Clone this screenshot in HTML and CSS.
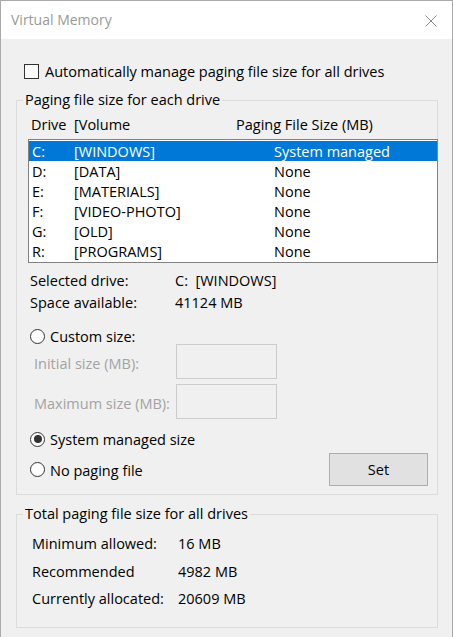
FILE: index.html
```html
<!DOCTYPE html>
<html lang="en">
<head>
    <meta charset="UTF-8">
    <title>Virtual Memory</title>
    <link rel="stylesheet" href="styles.css">
</head>
<body>
    <div class="window">
        <div class="titlebar">
            <span class="title">Virtual Memory</span>
            <svg class="close" width="12" height="12" viewBox="0 0 12 12">
                <path d="M0.5 0.5 L11.5 11.5 M11.5 0.5 L0.5 11.5" stroke="#8a8a8a" stroke-width="1" fill="none"/>
            </svg>
        </div>

        <div class="content">
            <div class="check-row">
                <span class="checkbox"></span>
                <span>Automatically manage paging file size for all drives</span>
            </div>

            <fieldset class="group drives">
                <legend>Paging file size for each drive</legend>

                <div class="list-header">
                    <span class="col-drive">Drive</span>
                    <span class="col-volume">[Volume</span>
                    <span>Paging File Size (MB)</span>
                </div>

                <div class="listbox">
                    <div class="list-row selected">
                        <span class="cell-drive">C:</span>
                        <span class="cell-volume">[WINDOWS]</span>
                        <span>System managed</span>
                    </div>
                    <div class="list-row">
                        <span class="cell-drive">D:</span>
                        <span class="cell-volume">[DATA]</span>
                        <span>None</span>
                    </div>
                    <div class="list-row">
                        <span class="cell-drive">E:</span>
                        <span class="cell-volume">[MATERIALS]</span>
                        <span>None</span>
                    </div>
                    <div class="list-row">
                        <span class="cell-drive">F:</span>
                        <span class="cell-volume">[VIDEO-PHOTO]</span>
                        <span>None</span>
                    </div>
                    <div class="list-row">
                        <span class="cell-drive">G:</span>
                        <span class="cell-volume">[OLD]</span>
                        <span>None</span>
                    </div>
                    <div class="list-row">
                        <span class="cell-drive">R:</span>
                        <span class="cell-volume">[PROGRAMS]</span>
                        <span>None</span>
                    </div>
                </div>

                <div class="info-row first">
                    <span class="info-label">Selected drive:</span>
                    <span>C:&nbsp; [WINDOWS]</span>
                </div>
                <div class="info-row">
                    <span class="info-label">Space available:</span>
                    <span>41124 MB</span>
                </div>

                <div class="radio-row custom">
                    <span class="radio"></span>
                    <span>Custom size:</span>
                </div>
                <div class="field-row">
                    <span class="field-label">Initial size (MB):</span>
                    <span class="field-box"></span>
                </div>
                <div class="field-row second">
                    <span class="field-label">Maximum size (MB):</span>
                    <span class="field-box"></span>
                </div>

                <div class="radio-row system">
                    <span class="radio checked"></span>
                    <span>System managed size</span>
                </div>
                <div class="radio-row none">
                    <span class="radio"></span>
                    <span class="grow">No paging file</span>
                    <button class="set-button">Set</button>
                </div>
            </fieldset>

            <fieldset class="group totals">
                <legend>Total paging file size for all drives</legend>
                <div class="total-row">
                    <span class="total-label">Minimum allowed:</span>
                    <span>16 MB</span>
                </div>
                <div class="total-row">
                    <span class="total-label">Recommended</span>
                    <span>4982 MB</span>
                </div>
                <div class="total-row">
                    <span class="total-label">Currently allocated:</span>
                    <span>20609 MB</span>
                </div>
            </fieldset>
        </div>
    </div>
</body>
</html>
```

FILE: styles.css
```css
:root {
    --face: #f0f0f0;
    --text: #000000;
    --disabled: #a3a3a3;
    --group-line: #dcdcdc;
    --highlight: #0078d7;
}

* {
    box-sizing: border-box;
}

body {
    margin: 0;
    font-family: "Open Sans", "Liberation Sans", sans-serif;
    font-size: 14.5px;
    color: var(--text);
    background: #ffffff;
}

.window {
    width: 453px;
    height: 637px;
    border: 1px solid #aaaaaa;
    border-bottom: none;
    background: var(--face);
    overflow: hidden;
}

.titlebar {
    height: 38px;
    background: #ffffff;
    display: flex;
    align-items: center;
    justify-content: space-between;
    padding: 0 15px 0 10px;
}

.title {
    color: #9a9a9a;
    font-size: 14px;
    line-height: 20px;
}

.close {
    display: block;
    margin-top: 1px;
}

.content {
    padding-top: 22px;
}

.check-row {
    display: flex;
    align-items: center;
    height: 20px;
    padding-left: 23px;
}

.checkbox {
    width: 15px;
    height: 15px;
    border: 1px solid #333333;
    background: #ffffff;
    margin-right: 6px;
}

/* group boxes */
.group {
    margin: 9px 14px 0 15px;
    padding: 0;
    border: 1px solid var(--group-line);
    min-width: 0;
}

.group legend {
    margin-left: 6px;
    padding: 0 2px;
    line-height: 20px;
}

.list-header {
    display: flex;
    height: 20px;
    line-height: 20px;
    margin-top: 5px;
    padding-left: 14px;
}

.col-drive {
    width: 43px;
}

.col-volume {
    width: 162px;
}

.listbox {
    width: 410px;
    margin: 4px 0 0 11px;
    border: 1px solid #828282;
    padding: 1px 0;
    background: #ffffff;
}

.list-row {
    display: flex;
    height: 20px;
    line-height: 21px;
    padding-left: 3px;
}

.list-row.selected {
    background: var(--highlight);
    color: #ffffff;
}

.cell-drive {
    width: 42px;
}

.cell-volume {
    width: 200px;
}

.info-row {
    display: flex;
    height: 20px;
    line-height: 21px;
    margin-top: 2px;
    padding-left: 13px;
}

.info-row.first {
    margin-top: 7px;
}

.info-label {
    width: 145px;
}

.radio-row {
    display: flex;
    align-items: center;
    padding-left: 13px;
}

.radio {
    width: 15px;
    height: 15px;
    border: 1px solid #333333;
    border-radius: 50%;
    background: #ffffff;
    margin-right: 5px;
    flex-shrink: 0;
    display: flex;
    align-items: center;
    justify-content: center;
}

.radio.checked::after {
    content: "";
    width: 8px;
    height: 8px;
    border-radius: 50%;
    background: #333333;
}

.radio-row.custom {
    height: 16px;
    margin-top: 16px;
}

.field-row {
    display: flex;
    align-items: center;
    padding-left: 17px;
}

.field-row.second {
    margin-top: 5px;
}

.field-label {
    width: 142px;
    color: var(--disabled);
    padding-top: 3px;
}

.field-box {
    width: 101px;
    height: 35px;
    border: 1px solid #cccccc;
    background: var(--face);
}

.radio-row.system {
    height: 20px;
    margin-top: 10px;
}

.radio-row.none {
    height: 33px;
    margin-top: 4px;
    padding-right: 9px;
    margin-bottom: 8px;
}

.grow {
    flex: 1;
    padding-top: 2px;
}

.set-button {
    width: 99px;
    height: 33px;
    border: 1px solid #adadad;
    background: #e1e1e1;
    font-family: inherit;
    font-size: 14.5px;
    color: var(--text);
    padding: 0;
}

.totals {
    padding-bottom: 18px;
}

.total-row {
    display: flex;
    height: 20px;
    line-height: 20px;
    padding-left: 15px;
    margin-top: 8px;
}

.total-row:first-of-type {
    margin-top: 10px;
}

.total-row:last-child {
    margin-top: 7px;
}

.total-label {
    width: 146px;
}
```
